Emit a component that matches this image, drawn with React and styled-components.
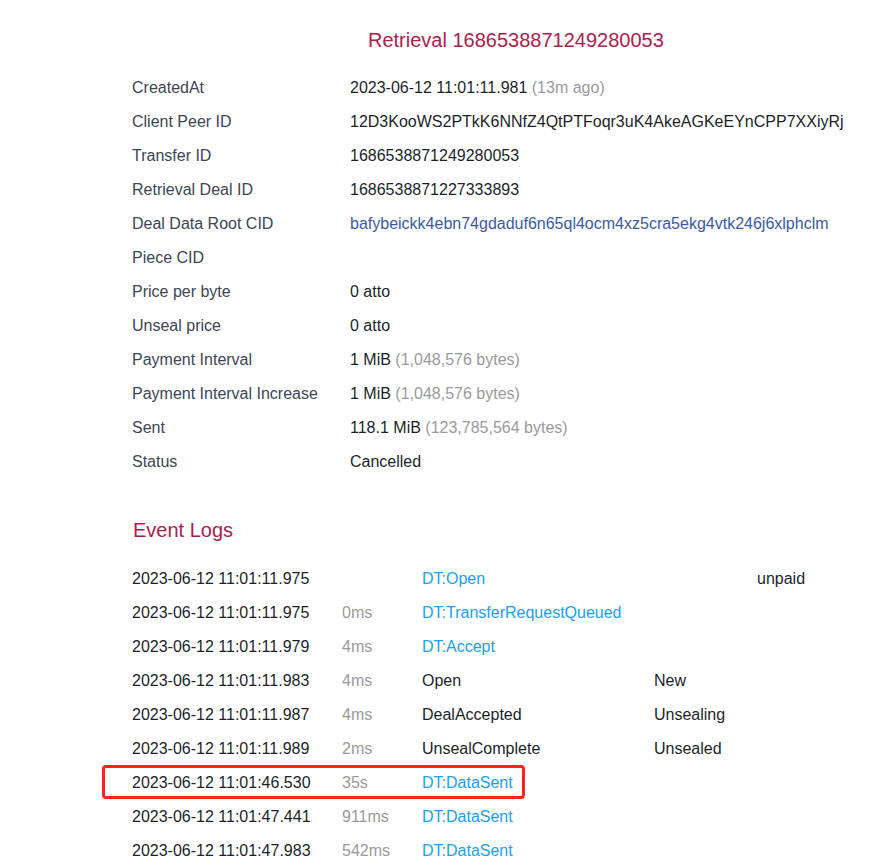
import React from "react";
import styled, { createGlobalStyle } from "styled-components";

const GlobalStyle = createGlobalStyle`
  body {
    margin: 0;
    background: #fff;
    font-family: "Liberation Sans", Arial, sans-serif;
    font-size: 16px;
    color: #1b1f2a;
  }
`;

const Page = styled.div`
  padding: 26px 0 0 132px;
`;

const Title = styled.h2`
  margin: 0 0 17px 236px;
  font-size: 20px;
  font-weight: normal;
  line-height: 28px;
  color: #b0204c;
`;

const Details = styled.div`
  display: grid;
  grid-template-columns: 218px auto;
  grid-auto-rows: 34px;
  align-items: center;
`;

const Label = styled.div`
  color: #3b4656;
  white-space: nowrap;
`;

const Value = styled.div`
  color: #1b1f2a;
  white-space: nowrap;
`;

const Muted = styled.span`
  color: #9a9a9a;
`;

const CidLink = styled.a`
  color: #3a5aa8;
  text-decoration: none;
`;

const SectionTitle = styled.h3`
  margin: 37px 0 18px 1px;
  font-size: 20px;
  font-weight: normal;
  line-height: 28px;
  color: #b0204c;
`;

const Events = styled.div`
  display: flex;
  flex-direction: column;
`;

const EventRow = styled.div`
  position: relative;
  display: grid;
  grid-template-columns: 210px 80px 232px 103px auto;
  height: 34px;
  align-items: center;
  white-space: nowrap;
`;

const Duration = styled.div`
  color: #9a9a9a;
`;

const EventName = styled.div`
  color: ${(p) => (p.$dt ? "#1a9ffb" : "#1b1f2a")};
`;

const Highlight = styled.div`
  position: absolute;
  left: -30px;
  top: -1px;
  width: 423px;
  height: 34px;
  box-sizing: border-box;
  border: 3px solid #ff2416;
  border-radius: 4px;
  pointer-events: none;
`;

const details = [
  ["CreatedAt", <>2023-06-12 11:01:11.981 <Muted>(13m ago)</Muted></>],
  ["Client Peer ID", "12D3KooWS2PTkK6NNfZ4QtPTFoqr3uK4AkeAGKeEYnCPP7XXiyRj"],
  ["Transfer ID", "1686538871249280053"],
  ["Retrieval Deal ID", "1686538871227333893"],
  ["Deal Data Root CID", <CidLink href="#">bafybeickk4ebn74gdaduf6n65ql4ocm4xz5cra5ekg4vtk246j6xlphclm</CidLink>],
  ["Piece CID", ""],
  ["Price per byte", "0 atto"],
  ["Unseal price", "0 atto"],
  ["Payment Interval", <>1 MiB <Muted>(1,048,576 bytes)</Muted></>],
  ["Payment Interval Increase", <>1 MiB <Muted>(1,048,576 bytes)</Muted></>],
  ["Sent", <>118.1 MiB <Muted>(123,785,564 bytes)</Muted></>],
  ["Status", "Cancelled"],
];

const events = [
  { at: "2023-06-12 11:01:11.975", dur: "", name: "DT:Open", state: "", note: "unpaid" },
  { at: "2023-06-12 11:01:11.975", dur: "0ms", name: "DT:TransferRequestQueued" },
  { at: "2023-06-12 11:01:11.979", dur: "4ms", name: "DT:Accept" },
  { at: "2023-06-12 11:01:11.983", dur: "4ms", name: "Open", state: "New" },
  { at: "2023-06-12 11:01:11.987", dur: "4ms", name: "DealAccepted", state: "Unsealing" },
  { at: "2023-06-12 11:01:11.989", dur: "2ms", name: "UnsealComplete", state: "Unsealed" },
  { at: "2023-06-12 11:01:46.530", dur: "35s", name: "DT:DataSent", marked: true },
  { at: "2023-06-12 11:01:47.441", dur: "911ms", name: "DT:DataSent" },
  { at: "2023-06-12 11:01:47.983", dur: "542ms", name: "DT:DataSent" },
];

export default function App() {
  return (
    <>
      <GlobalStyle />
      <Page>
        <Title>Retrieval 1686538871249280053</Title>
        <Details>
          {details.map(([label, value]) => (
            <React.Fragment key={label}>
              <Label>{label}</Label>
              <Value>{value}</Value>
            </React.Fragment>
          ))}
        </Details>
        <SectionTitle>Event Logs</SectionTitle>
        <Events>
          {events.map((e, i) => (
            <EventRow key={i}>
              <div>{e.at}</div>
              <Duration>{e.dur}</Duration>
              <EventName $dt={e.name.startsWith("DT:")}>{e.name}</EventName>
              <div>{e.state}</div>
              <div>{e.note}</div>
              {e.marked && <Highlight />}
            </EventRow>
          ))}
        </Events>
      </Page>
    </>
  );
}
